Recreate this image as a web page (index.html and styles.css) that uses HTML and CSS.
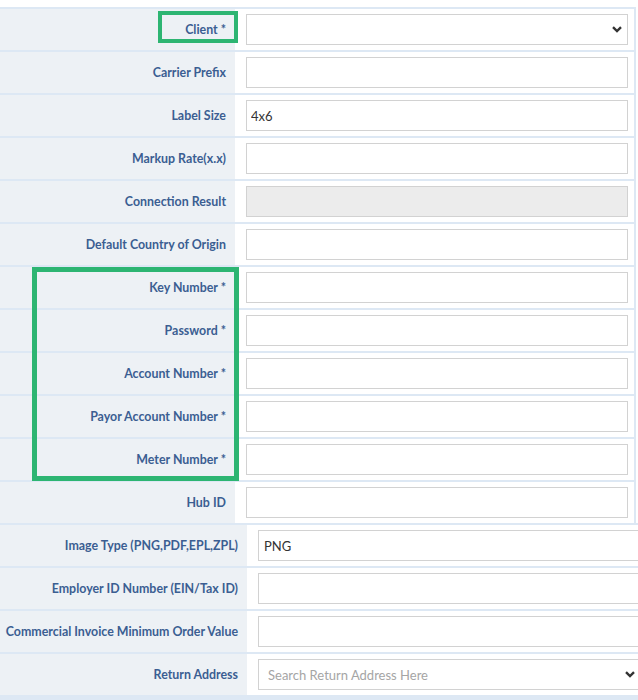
FILE: index.html
```html
<!DOCTYPE html>
<html lang="en">
<head>
    <meta charset="UTF-8">
    <title>Carrier Settings</title>
    <link rel="stylesheet" href="styles.css">
</head>
<body>

    <div class="page">
        <!-- Carrier account -->
        <table class="form-table main">
            <tr>
                <td class="label">Client *</td>
                <td class="field">
                    <div class="select-wrap">
                        <select class="input"><option></option></select>
                        <svg class="chevron" width="10" height="7" viewBox="0 0 10 7"><path d="M1 1.2 L5 5 L9 1.2" fill="none" stroke="#333" stroke-width="2.4"/></svg>
                    </div>
                </td>
            </tr>
            <tr>
                <td class="label">Carrier Prefix</td>
                <td class="field"><input class="input" type="text"></td>
            </tr>
            <tr>
                <td class="label">Label Size</td>
                <td class="field"><input class="input" type="text" value="4x6"></td>
            </tr>
            <tr>
                <td class="label">Markup Rate(x.x)</td>
                <td class="field"><input class="input" type="text"></td>
            </tr>
            <tr>
                <td class="label">Connection Result</td>
                <td class="field"><input class="input" type="text" disabled></td>
            </tr>
            <tr>
                <td class="label">Default Country of Origin</td>
                <td class="field"><input class="input" type="text"></td>
            </tr>
            <tr>
                <td class="label">Key Number *</td>
                <td class="field"><input class="input" type="text"></td>
            </tr>
            <tr>
                <td class="label">Password *</td>
                <td class="field"><input class="input" type="text"></td>
            </tr>
            <tr>
                <td class="label">Account Number *</td>
                <td class="field"><input class="input" type="text"></td>
            </tr>
            <tr>
                <td class="label">Payor Account Number *</td>
                <td class="field"><input class="input" type="text"></td>
            </tr>
            <tr>
                <td class="label">Meter Number *</td>
                <td class="field"><input class="input" type="text"></td>
            </tr>
            <tr>
                <td class="label">Hub ID</td>
                <td class="field"><input class="input" type="text"></td>
            </tr>
        </table>

        <!-- Label options -->
        <table class="form-table extra">
            <tr>
                <td class="label">Image Type (PNG,PDF,EPL,ZPL)</td>
                <td class="field"><input class="input" type="text" value="PNG"></td>
            </tr>
            <tr>
                <td class="label">Employer ID Number (EIN/Tax ID)</td>
                <td class="field"><input class="input" type="text"></td>
            </tr>
            <tr>
                <td class="label">Commercial Invoice Minimum Order Value</td>
                <td class="field"><input class="input" type="text"></td>
            </tr>
            <tr>
                <td class="label">Return Address</td>
                <td class="field">
                    <div class="select-wrap">
                        <input class="input search" type="text" placeholder="Search Return Address Here">
                        <svg class="chevron" width="10" height="7" viewBox="0 0 10 7"><path d="M1 1.2 L5 5 L9 1.2" fill="none" stroke="#333" stroke-width="2.4"/></svg>
                    </div>
                </td>
            </tr>
        </table>
        <div class="bottom"></div>

        <!-- Markierungen -->
        <div class="mark mark-client"></div>
        <div class="mark mark-keys"></div>
    </div>

</body>
</html>
```

FILE: styles.css
```css
body {
    margin: 0;
    background-color: #fff;
    font-family: Lato, "Open Sans", sans-serif;
    overflow: hidden;
}

.page {
    position: relative;
    padding-top: 7px;
    width: 660px;
}

.form-table {
    border-collapse: collapse;
    table-layout: fixed;
}

.form-table td {
    border-top: 2px solid #dde8f4;
    padding: 0;
    height: 41px;
}

.main {
    width: 636px;
    border-right: 2px solid #dde8f4;
}

.main .label { width: 226px; }

.extra {
    width: 647px;
}

.extra .label { width: 238px; }

.label {
    background-color: #edf1f5;
    color: #3b5e92;
    font-size: 12.4px;
    font-weight: 700;
    text-align: right;
    padding: 0 9px 0 0 !important;
    white-space: nowrap;
}

.field {
    padding: 0 6px 0 11px !important;
}

.input {
    display: block;
    box-sizing: border-box;
    width: 100%;
    height: 31px;
    margin: 0;
    padding: 0 8px 0 4px;
    border: 1px solid #d2d2d2;
    border-radius: 0;
    background-color: #fff;
    font-family: Lato, "Open Sans", sans-serif;
    font-size: 13px;
    color: #333;
    outline: none;
    appearance: none;
}

.input::placeholder { color: #a5a5a5; }

.input:disabled {
    background-color: #ececec;
}

.extra .input { padding-left: 5px; }
.extra .search { padding-left: 9px; }

.select-wrap {
    position: relative;
}

.chevron {
    position: absolute;
    right: 6px;
    top: 12px;
}

.bottom {
    border-top: 2px solid #dde8f4;
    background-color: #dde8f4;
    height: 20px;
}

/* Markierungen */
.mark {
    position: absolute;
    border: 4px solid #2db572;
    box-sizing: border-box;
}

.mark-client {
    left: 158px;
    top: 11px;
    width: 80px;
    height: 32px;
}

.mark-keys {
    left: 32px;
    top: 267px;
    width: 207px;
    height: 214px;
    border-width: 5px;
}
```
